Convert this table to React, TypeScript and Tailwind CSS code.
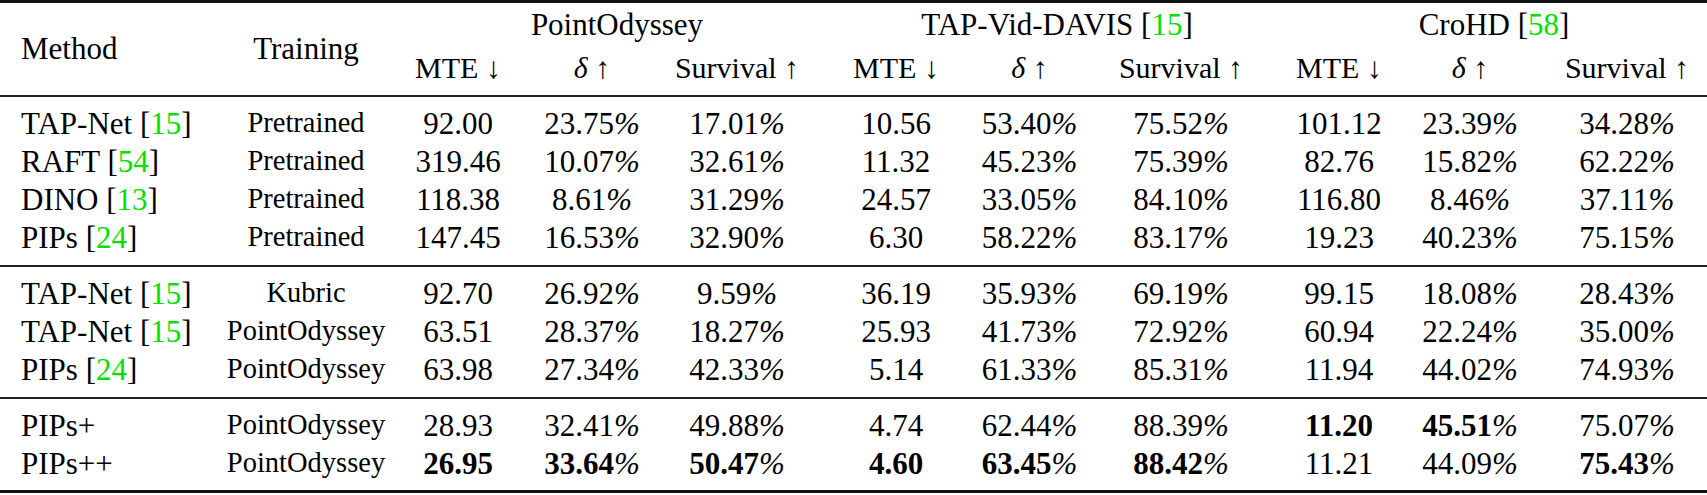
import React from "react";

const COLS = "grid-cols-[212px_188px_123px_133px_170px_135px_137px_172px_133px_137px_167px]";

// padding classes per data column (index 0..8) to shift centers
const SHIFT = [
  "pr-[7px]", // M1
  "pl-[5px]", // D1
  "pr-[8px]", // S1
  "pl-[5px]", // M2
  "", // D2
  "pr-[6px]", // S2
  "pl-[5px]", // M3
  "pr-[3px]", // D3
  "pl-[7px]", // S3
];

type Row = { name: string; cite?: string; train: string; vals: string[] };

const groups: Row[][] = [
  [
    { name: "TAP-Net", cite: "15", train: "Pretrained", vals: ["92.00", "23.75%", "17.01%", "10.56", "53.40%", "75.52%", "101.12", "23.39%", "34.28%"] },
    { name: "RAFT", cite: "54", train: "Pretrained", vals: ["319.46", "10.07%", "32.61%", "11.32", "45.23%", "75.39%", "82.76", "15.82%", "62.22%"] },
    { name: "DINO", cite: "13", train: "Pretrained", vals: ["118.38", "8.61%", "31.29%", "24.57", "33.05%", "84.10%", "116.80", "8.46%", "37.11%"] },
    { name: "PIPs", cite: "24", train: "Pretrained", vals: ["147.45", "16.53%", "32.90%", "6.30", "58.22%", "83.17%", "19.23", "40.23%", "75.15%"] },
  ],
  [
    { name: "TAP-Net", cite: "15", train: "Kubric", vals: ["92.70", "26.92%", "9.59%", "36.19", "35.93%", "69.19%", "99.15", "18.08%", "28.43%"] },
    { name: "TAP-Net", cite: "15", train: "PointOdyssey", vals: ["63.51", "28.37%", "18.27%", "25.93", "41.73%", "72.92%", "60.94", "22.24%", "35.00%"] },
    { name: "PIPs", cite: "24", train: "PointOdyssey", vals: ["63.98", "27.34%", "42.33%", "5.14", "61.33%", "85.31%", "11.94", "44.02%", "74.93%"] },
  ],
  [
    { name: "PIPs+", train: "PointOdyssey", vals: ["28.93", "32.41%", "49.88%", "4.74", "62.44%", "88.39%", "*11.20", "*45.51%", "75.07%"] },
    { name: "PIPs++", train: "PointOdyssey", vals: ["*26.95", "*33.64%", "*50.47%", "*4.60", "*63.45%", "*88.42%", "11.21", "44.09%", "*75.43%"] },
  ],
];

function Val({ v }: { v: string }) {
  const bold = v.startsWith("*");
  let s = bold ? v.slice(1) : v;
  const pct = s.endsWith("%");
  if (pct) s = s.slice(0, -1);
  return (
    <span className="whitespace-nowrap">
      {bold ? <b className="font-bold">{s}</b> : s}
      {pct && <i className="italic">%</i>}
    </span>
  );
}

function Cite({ n }: { n: string }) {
  return (
    <span>
      [<span className="text-[#00e000]">{n}</span>]
    </span>
  );
}

function Sub({ kind }: { kind: "m" | "d" | "s" }) {
  if (kind === "m") return <span className="whitespace-nowrap">MTE ↓</span>;
  if (kind === "d")
    return (
      <span className="whitespace-nowrap">
        <i>δ</i> ↑
      </span>
    );
  return <span className="whitespace-nowrap">Survival ↑</span>;
}

export default function App() {
  const kinds: ("m" | "d" | "s")[] = ["m", "d", "s", "m", "d", "s", "m", "d", "s"];
  return (
    <div className="w-[1707px] h-[495px] bg-white text-black font-[family-name:Liberation_Serif] text-[31px] leading-none overflow-hidden">
      <div className="h-[3px] bg-[#111]" />
      {/* header */}
      <div className={`grid ${COLS} grid-rows-[42px_50px]`}>
        <div className="row-span-2 flex items-center pl-[21px] pb-[2px]">Method</div>
        <div className="row-span-2 flex items-center justify-center pb-[2px]">Training</div>
        <div className="col-span-3 flex items-center justify-center pl-[8px] whitespace-nowrap">PointOdyssey</div>
        <div className="col-span-3 flex items-center justify-center pl-[18px] whitespace-nowrap">
          <span>
            TAP-Vid-DAVIS <Cite n="15" />
          </span>
        </div>
        <div className="col-span-3 flex items-center justify-center pl-[11px] whitespace-nowrap">
          <span>
            CroHD <Cite n="58" />
          </span>
        </div>
        {kinds.map((k, i) => (
          <div key={i} className={`flex items-center justify-center text-[30px] pb-[4px] ${SHIFT[i]}`}>
            <Sub kind={k} />
          </div>
        ))}
      </div>
      {groups.map((g, gi) => (
        <div key={gi}>
          <div className="h-[2px] bg-[#222]" />
          <div className={`pt-[7px] ${gi === 2 ? "pb-[8px]" : "pb-[9px]"}`}>
            {g.map((r, ri) => (
              <div key={ri} className={`grid ${COLS} h-[38px]`}>
                <div className="flex items-center pl-[21px] whitespace-nowrap">
                  <span>
                    {r.name}
                    {r.cite && (
                      <>
                        {" "}
                        <Cite n={r.cite} />
                      </>
                    )}
                  </span>
                </div>
                <div className="flex items-center justify-center text-[28.5px] whitespace-nowrap">{r.train}</div>
                {r.vals.map((v, vi) => (
                  <div key={vi} className={`flex items-center justify-center ${SHIFT[vi]}`}>
                    <Val v={v} />
                  </div>
                ))}
              </div>
            ))}
          </div>
        </div>
      ))}
      <div className="h-[3px] bg-[#111]" />
    </div>
  );
}
